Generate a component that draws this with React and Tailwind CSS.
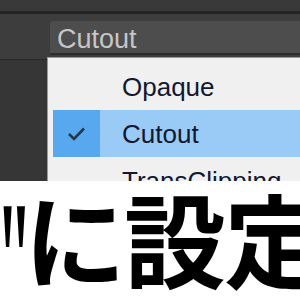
import React from 'react';

const MenuRow = ({ label, selected }) => (
    <div className={`flex h-[47px] shrink-0 items-center ${selected ? 'bg-[#99cbf6]' : ''}`}>
        <div className={`flex h-full w-[47px] items-center justify-center ${selected ? 'bg-[#58a8f0]' : ''}`}>
            {selected && (
                <svg width="19" height="15" viewBox="0 0 19 15" fill="none">
                    <path d="M2 8 L7 13 L17 2.5" stroke="#263646" strokeWidth="2.6" />
                </svg>
            )}
        </div>
        <span className="whitespace-nowrap pl-[22px] text-[26px] leading-none text-[#121830] font-['Liberation_Sans',Arial,sans-serif]">
            {label}
        </span>
    </div>
);

const Glyph = ({ children, className = '' }) => (
    <span className={`flex w-[100px] shrink-0 justify-center ${className}`}>{children}</span>
);

const App = () => {
    return (
        <div className="flex h-[300px] w-[300px] flex-col overflow-hidden bg-[#3a3a3a]">
            {/* toolbar strip */}
            <div className="h-[11px] shrink-0 bg-[#393939]" />
            <div className="h-[3px] shrink-0 bg-[#242424]" />

            {/* inspector area */}
            <div className="flex h-[167px] shrink-0">
                <div className="flex w-[47px] shrink-0 flex-col">
                    <div className="h-[45px] bg-[#3d3d3d]" />
                    <div className="h-px bg-[#2a2a2a]" />
                    <div className="flex-1 bg-[#363636]" />
                </div>
                <div className="flex min-w-0 flex-1 flex-col bg-[#3d3d3d]">
                    <div className="ml-[3px] mt-[7px] flex h-[34px] shrink-0 items-center rounded-tl-[3px] border-b-2 border-[#2c2c2c] bg-[#4d4d4d] pl-[7px] pt-[4px]">
                        <span className="text-[27px] leading-none text-[#c6c6c6] font-['Liberation_Sans',Arial,sans-serif]">Cutout</span>
                    </div>
                    <div className="mt-[2px] flex flex-1 flex-col overflow-hidden border-l border-t border-[#9a9a9a] bg-[#f0f0f0] pl-[5px] pt-[5px]">
                        <MenuRow label="Opaque" />
                        <MenuRow label="Cutout" selected />
                        <MenuRow label="TransClipping" />
                    </div>
                </div>
            </div>

            {/* caption */}
            <div className="flex-1 overflow-hidden bg-white">
                <div className="ml-[-75px] flex whitespace-nowrap pt-[5px] text-[102px] font-bold leading-none text-black font-['Noto_Sans_CJK_JP',sans-serif]">
                    <Glyph className="items-start justify-end">
                        <span className="mr-[-7px] mt-[-9px] inline-block origin-top scale-y-[2.7] text-[64px] font-bold leading-none font-['Liberation_Serif',serif]">"</span>
                    </Glyph>
                    <Glyph>に</Glyph>
                    <Glyph>設</Glyph>
                    <Glyph>定</Glyph>
                </div>
            </div>
        </div>
    );
};

export default App;
